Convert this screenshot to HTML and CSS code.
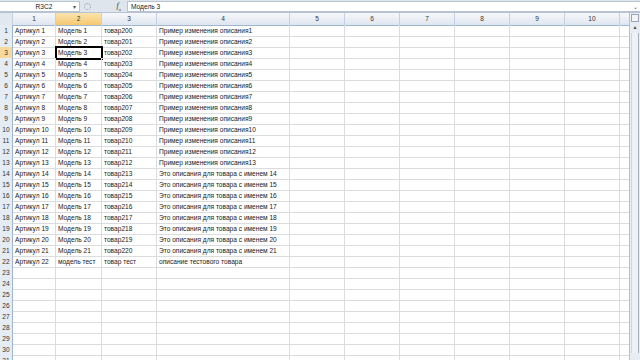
FILE: index.html
```html
<!DOCTYPE html>
<html lang="ru">
<head>
  <meta charset="UTF-8" />
  <meta name="viewport" content="width=device-width, initial-scale=1.0" />
  <title>Книга1</title>
  <link rel="stylesheet" href="styles.css">
</head>
<body>
  <div class="formula-bar">
    <div class="name-box"><span>R3C2</span><i class="arrow">&#9662;</i></div>
    <div class="grip"></div>
    <div class="fx">f<sub>x</sub></div>
    <div class="formula-input"><span>Модель 3</span><i class="arrow">&#8964;</i></div>
  </div>

  <div class="workspace">
    <div class="sheet">
      <div class="row head">
        <span class="corner"></span>
        <span>1</span><span class="active">2</span><span>3</span><span>4</span>
        <span>5</span><span>6</span><span>7</span><span>8</span><span>9</span><span>10</span>
        <span class="edge"></span>
      </div>

      <div class="row"><b>1</b><span>Артикул 1</span><span>Модель 1</span><span>товар200</span><span>Пример изменения описания1</span><span class="rest"></span></div>
      <div class="row"><b>2</b><span>Артикул 2</span><span>Модель 2</span><span>товар201</span><span>Пример изменения описания2</span><span class="rest"></span></div>
      <div class="row"><b class="active">3</b><span>Артикул 3</span><span class="selected">Модель 3</span><span>товар202</span><span>Пример изменения описания3</span><span class="rest"></span></div>
      <div class="row"><b>4</b><span>Артикул 4</span><span>Модель 4</span><span>товар203</span><span>Пример изменения описания4</span><span class="rest"></span></div>
      <div class="row"><b>5</b><span>Артикул 5</span><span>Модель 5</span><span>товар204</span><span>Пример изменения описания5</span><span class="rest"></span></div>
      <div class="row"><b>6</b><span>Артикул 6</span><span>Модель 6</span><span>товар205</span><span>Пример изменения описания6</span><span class="rest"></span></div>
      <div class="row"><b>7</b><span>Артикул 7</span><span>Модель 7</span><span>товар206</span><span>Пример изменения описания7</span><span class="rest"></span></div>
      <div class="row"><b>8</b><span>Артикул 8</span><span>Модель 8</span><span>товар207</span><span>Пример изменения описания8</span><span class="rest"></span></div>
      <div class="row"><b>9</b><span>Артикул 9</span><span>Модель 9</span><span>товар208</span><span>Пример изменения описания9</span><span class="rest"></span></div>
      <div class="row"><b>10</b><span>Артикул 10</span><span>Модель 10</span><span>товар209</span><span>Пример изменения описания10</span><span class="rest"></span></div>
      <div class="row"><b>11</b><span>Артикул 11</span><span>Модель 11</span><span>товар210</span><span>Пример изменения описания11</span><span class="rest"></span></div>
      <div class="row"><b>12</b><span>Артикул 12</span><span>Модель 12</span><span>товар211</span><span>Пример изменения описания12</span><span class="rest"></span></div>
      <div class="row"><b>13</b><span>Артикул 13</span><span>Модель 13</span><span>товар212</span><span>Пример изменения описания13</span><span class="rest"></span></div>
      <div class="row"><b>14</b><span>Артикул 14</span><span>Модель 14</span><span>товар213</span><span>Это описания для товара с именем 14</span><span class="rest"></span></div>
      <div class="row"><b>15</b><span>Артикул 15</span><span>Модель 15</span><span>товар214</span><span>Это описания для товара с именем 15</span><span class="rest"></span></div>
      <div class="row"><b>16</b><span>Артикул 16</span><span>Модель 16</span><span>товар215</span><span>Это описания для товара с именем 16</span><span class="rest"></span></div>
      <div class="row"><b>17</b><span>Артикул 17</span><span>Модель 17</span><span>товар216</span><span>Это описания для товара с именем 17</span><span class="rest"></span></div>
      <div class="row"><b>18</b><span>Артикул 18</span><span>Модель 18</span><span>товар217</span><span>Это описания для товара с именем 18</span><span class="rest"></span></div>
      <div class="row"><b>19</b><span>Артикул 19</span><span>Модель 19</span><span>товар218</span><span>Это описания для товара с именем 19</span><span class="rest"></span></div>
      <div class="row"><b>20</b><span>Артикул 20</span><span>Модель 20</span><span>товар219</span><span>Это описания для товара с именем 20</span><span class="rest"></span></div>
      <div class="row"><b>21</b><span>Артикул 21</span><span>Модель 21</span><span>товар220</span><span>Это описания для товара с именем 21</span><span class="rest"></span></div>
      <div class="row"><b>22</b><span>Артикул 22</span><span>модель тест</span><span>товар тест</span><span>описание тестового товара</span><span class="rest"></span></div>
      <div class="row"><b>23</b><span></span><span></span><span></span><span></span><span class="rest"></span></div>
      <div class="row"><b>24</b><span></span><span></span><span></span><span></span><span class="rest"></span></div>
      <div class="row"><b>25</b><span></span><span></span><span></span><span></span><span class="rest"></span></div>
      <div class="row"><b>26</b><span></span><span></span><span></span><span></span><span class="rest"></span></div>
      <div class="row"><b>27</b><span></span><span></span><span></span><span></span><span class="rest"></span></div>
      <div class="row"><b>28</b><span></span><span></span><span></span><span></span><span class="rest"></span></div>
      <div class="row"><b>29</b><span></span><span></span><span></span><span></span><span class="rest"></span></div>
      <div class="row"><b>30</b><span></span><span></span><span></span><span></span><span class="rest"></span></div>
      <div class="row"><b>31</b><span></span><span></span><span></span><span></span><span class="rest"></span></div>
    </div>

    <div class="scrollbar">
      <div class="split"></div>
      <div class="btn">&#9650;</div>
      <div class="track"><div class="thumb"></div></div>
    </div>
  </div>
</body>
</html>
```

FILE: styles.css
```css
body {
  margin: 0;
  width: 640px;
  height: 360px;
  overflow: hidden;
  font-family: "Liberation Sans", Arial, sans-serif;
  font-size: 6.6px;
  color: #1a1a1a;
  background: #fff;
}

/* formula bar */
.formula-bar {
  display: flex;
  align-items: center;
  height: 13px;
  background: #dfe5ed;
  border-bottom: 1px solid #b7c3d3;
  box-sizing: border-box;
}
.name-box {
  width: 80px;
  height: 11px;
  display: flex;
  align-items: center;
  background: #fff;
  border: 1px solid #b9c4d2;
  border-left: none;
  box-sizing: border-box;
}
.name-box span {
  flex: 1;
  text-align: center;
  padding-left: 18px;
}
.arrow {
  font-style: normal;
  font-size: 6px;
  color: #555;
  width: 9px;
  text-align: center;
}
.grip {
  width: 7px;
  height: 7px;
  margin-left: 4px;
  border-radius: 50%;
  border: 1px dotted #9aa6b5;
  box-sizing: border-box;
}
.fx {
  width: 36px;
  text-align: right;
  padding-right: 6px;
  box-sizing: border-box;
  font-family: "Liberation Serif", serif;
  font-style: italic;
  font-size: 8px;
  color: #3b3b3b;
}
.fx sub { font-size: 5px; }
.formula-input {
  flex: 1;
  height: 11px;
  display: flex;
  align-items: center;
  background: #fff;
  border: 1px solid #b9c4d2;
  border-right: none;
  box-sizing: border-box;
}
.formula-input span {
  flex: 1;
  padding-left: 3px;
}

/* grid */
.workspace {
  display: flex;
  height: 347px;
}
.sheet {
  width: 629px;
  overflow: hidden;
}
.row {
  display: grid;
  grid-template-columns: 13px 43px 46px 55px 133px 1fr;
  height: 11px;
  line-height: 11px;
}
.row > * {
  border-right: 1px solid #dadcdd;
  border-bottom: 1px solid #dadcdd;
  white-space: nowrap;
  overflow: visible;
  padding-left: 2px;
}
.row b {
  font-weight: normal;
  text-align: center;
  padding: 0;
  color: #333;
  background: #e6ecf4;
  border-right-color: #9eb6ce;
  border-bottom-color: #c7d2df;
}
.row b.active {
  background: #f9d99b;
  border-bottom-color: #e0b46a;
}
.row .rest {
  border-right: none;
  padding: 0;
  background-image: linear-gradient(to left, #dadcdd 1px, transparent 1px);
  background-size: 55px 100%;
}
.selected {
  outline: 2px solid #000;
  outline-offset: -1px;
}

/* column header */
.row.head {
  grid-template-columns: 13px 43px 46px 55px 133px repeat(6, 55px) 1fr;
  height: 12px;
  line-height: 12px;
}
.row.head > * {
  text-align: center;
  padding: 0;
  color: #333;
  background: linear-gradient(#f6f8fb, #dfe6ef);
  border-right-color: #c5d1de;
  border-bottom-color: #9eb6ce;
}
.row.head .active {
  background: linear-gradient(#fbe3ae, #f5c86f);
}
.row.head .corner {
  background: #e2e8f0;
}
.row.head .edge {
  border-right: none;
}

/* scrollbar */
.scrollbar {
  width: 11px;
  display: flex;
  flex-direction: column;
  background: #e8edf3;
  border-left: 1px solid #b7c0cc;
  box-sizing: border-box;
}
.split {
  height: 6px;
  margin: 1px 1px 0;
  border: 1px solid #9aa6b5;
  background: #f2f4f7;
}
.btn {
  height: 11px;
  text-align: center;
  font-size: 5px;
  line-height: 11px;
  color: #4b4b4b;
}
.track {
  flex: 1;
  display: flex;
  justify-content: center;
}
.thumb {
  width: 6px;
  height: 320px;
  border-left: 1px solid #cfd6df;
  border-right: 1px solid #a8b1bd;
  background: #eef1f5;
}
```
